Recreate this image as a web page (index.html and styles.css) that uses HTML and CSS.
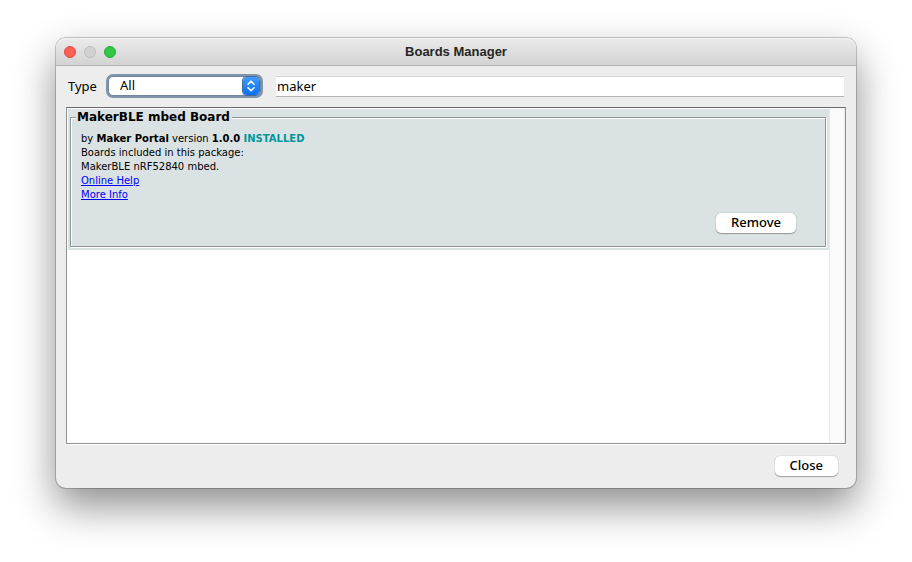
FILE: index.html
```html
<!DOCTYPE html>
<html lang="en">
<head>
<meta charset="utf-8">
<title>Boards Manager</title>
<link rel="stylesheet" href="styles.css">
</head>
<body>
<main class="window">
  <header class="titlebar">
    <div class="lights">
      <button class="light light-close" aria-label="Close window"></button>
      <button class="light light-minimize" aria-label="Minimize window" disabled></button>
      <button class="light light-zoom" aria-label="Zoom window"></button>
    </div>
    <h1 class="title">Boards Manager</h1>
  </header>
  <div class="toolbar">
    <label class="type-label" for="type">Type</label>
    <div class="picker">
      <select id="type" class="picker-select">
        <option>All</option>
      </select>
      <span class="picker-knob">
        <svg width="8" height="12" viewBox="0 0 8 12" fill="none" stroke="#fff" stroke-width="1.6" stroke-linecap="round" stroke-linejoin="round" aria-hidden="true">
          <path d="M1 4.2 4 1.2 7 4.2M1 7.8 4 10.8 7 7.8"/>
        </svg>
      </span>
    </div>
    <input class="search" type="text" value="maker" aria-label="Filter boards">
  </div>
  <section class="results">
    <div class="list">
      <article class="item">
        <fieldset class="board">
          <legend class="board-name">MakerBLE mbed Board</legend>
          <p class="line">by <b>Maker Portal</b> version <b>1.0.0</b> <b class="installed">INSTALLED</b></p>
          <p class="line">Boards included in this package:</p>
          <p class="line">MakerBLE nRF52840 mbed.</p>
          <p class="line"><a href="#help">Online Help</a></p>
          <p class="line"><a href="#info">More Info</a></p>
          <div class="actions"><button class="button">Remove</button></div>
        </fieldset>
      </article>
    </div>
    <div class="gutter"></div>
  </section>
  <footer class="footer"><button class="button">Close</button></footer>
</main>
</body>
</html>
```
FILE: styles.css
```css
* { box-sizing: border-box; }

body {
  display: flex;
  min-height: 100vh;
  margin: 0;
  padding: 38px 56px 74px;
  background: #fff;
  color: #000;
  font: 13px/16px "Noto Sans", "Lucida Grande", sans-serif;
}

.window {
  display: flex;
  flex: 1;
  flex-direction: column;
  min-width: 0;
  border-radius: 10px;
  background: #ededed;
  box-shadow: 0 0 0 1px rgba(0, 0, 0, 0.2), 0 18px 40px rgba(0, 0, 0, 0.45);
}

.titlebar {
  display: grid;
  grid-template-columns: 1fr auto 1fr;
  align-items: center;
  height: 28px;
  padding: 0 8px;
  border-bottom: 1px solid #b1b1b1;
  border-radius: 10px 10px 0 0;
  background: linear-gradient(#ebebeb, #d3d3d3);
  box-shadow: inset 0 1px #f4f4f4;
}

.lights { display: flex; gap: 8px; }

.light {
  width: 12px;
  height: 12px;
  padding: 0;
  border: 1px solid;
  border-radius: 50%;
}
.light-close { border-color: #e2463f; background: #fd5f57; }
.light-minimize { border-color: #bdbdbd; background: #d2d2d2; }
.light-zoom { border-color: #27a936; background: #32c748; }

.title {
  margin: 0;
  color: #262626;
  font: bold 13px/16px "Liberation Sans", Helvetica, sans-serif;
}

.toolbar {
  display: flex;
  align-items: center;
  height: 41px;
  padding: 0 12px;
}

.type-label { width: 40px; padding-bottom: 2px; }

.picker {
  display: grid;
  flex: none;
  width: 153px;
  align-items: center;
  justify-items: end;
  margin: 0 15px 2px 0;
}
.picker > * { grid-area: 1 / 1; }

.picker-select {
  appearance: none;
  width: 100%;
  height: 20px;
  padding: 0 28px 2px 11px;
  border: 1px solid #71879e;
  border-radius: 5px;
  outline: none;
  background: #fff;
  box-shadow: 0 0 0 2px #8194a9;
  color: #000;
  font: inherit;
}

.picker-knob {
  display: flex;
  align-items: center;
  justify-content: center;
  width: 16px;
  height: 18px;
  margin-right: 2px;
  border-radius: 4px;
  background: linear-gradient(#3f9bfb, #0b70f5);
  box-shadow: 0 0 0 1px #466b98;
  pointer-events: none;
}

.search {
  flex: 1;
  min-width: 0;
  height: 21px;
  padding: 0 1px 2px;
  border: 1px solid #d4d4d4;
  border-width: 1px 0;
  border-bottom-color: #b4b4b4;
  outline: none;
  background: #fff;
  color: #000;
  font: inherit;
}

.results {
  display: flex;
  flex: 1;
  margin: 0 10px;
  border: 1px solid #929292;
  border-top-color: #696969;
  background: #fff;
  box-shadow: 0 1px #fff;
}

.list { flex: 1; min-width: 0; padding: 1px 0 0 1px; }

.item { padding: 1px 3px 3px 2px; background: #dae2e3; }

.board {
  min-width: 0;
  margin: 0;
  padding: 8px 29px 13px 10px;
  border: 1px solid #8f9697;
  box-shadow: 1px 1px #fff, inset 1px 1px #fff;
}

.board-name {
  margin-left: -5px;
  padding: 0 2px 0 1px;
  background: #dae2e3;
  font: bold 12px/14px "DejaVu Sans", Verdana, sans-serif;
}

.line {
  margin: 0;
  font: 10px/14px "DejaVu Sans", Verdana, sans-serif;
}
.line a { color: #00f; }
.installed { color: #00979d; }

.actions { display: flex; justify-content: flex-end; margin-top: 11px; }

.button {
  height: 20px;
  padding: 0 15px 2px;
  border: 0;
  border-radius: 5px;
  background: #fff;
  box-shadow: 0 0 1px rgba(0, 0, 0, 0.35), 0 1px 1px rgba(0, 0, 0, 0.3);
  color: #000;
  font: inherit;
  font-weight: 500;
}

.gutter {
  width: 16px;
  border: 1px solid #e8e8e8;
  border-width: 0 1px;
  background: #fafafa;
}

.footer {
  display: flex;
  justify-content: flex-end;
  padding: 12px 18px;
}
```
